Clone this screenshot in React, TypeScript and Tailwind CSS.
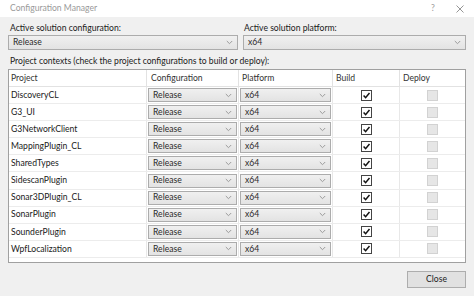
import React from "react";

const projects = [
  "DiscoveryCL",
  "G3_UI",
  "G3NetworkClient",
  "MappingPlugin_CL",
  "SharedTypes",
  "SidescanPlugin",
  "Sonar3DPlugin_CL",
  "SonarPlugin",
  "SounderPlugin",
  "WpfLocalization",
];

function Chevron({ color = "#888" }: { color?: string }) {
  return (
    <svg width="7" height="5" viewBox="0 0 7 5" className="shrink-0">
      <path d="M0.8 1 L3.5 3.7 L6.2 1" fill="none" stroke={color} strokeWidth="1" />
    </svg>
  );
}

function Combo({ value, h = "h-[15px]" }: { value: string; h?: string }) {
  return (
    <div
      className={`flex items-center justify-between ${h} border border-[#acacac] bg-gradient-to-b from-[#f0f0f0] to-[#e3e3e3] pl-[4px] pr-[4px] text-[#2a2a2a]`}
    >
      <span>{value}</span>
      <Chevron color="#9a9a9a" />
    </div>
  );
}

function Check({ checked }: { checked: boolean }) {
  if (checked) {
    return (
      <div className="w-[11px] h-[11px] border border-[#444] bg-white flex items-center justify-center">
        <svg width="9" height="9" viewBox="0 0 9 9">
          <path d="M1.6 4.6 L3.6 6.7 L7.5 2" fill="none" stroke="#111" strokeWidth="1.5" />
        </svg>
      </div>
    );
  }
  return <div className="w-[11px] h-[11px] border border-[#d2d2d2] bg-[#e6e6e6]" />;
}

export default function App() {
  return (
    <div
      className="w-[474px] h-[296px] bg-[#f0f0f0] overflow-hidden text-[8.6px] leading-none text-[#1a1a1a]"
      style={{ fontFamily: 'Lato, "Noto Sans", sans-serif' }}
    >
      {/* title bar */}
      <div className="h-[17px] bg-white flex items-center pl-[10px] pr-[9px] text-[#9a9a9a]">
        <span className="flex-1">Configuration Manager</span>
        <span className="w-[10px] text-center mr-[18px]">?</span>
        <svg width="8" height="8" viewBox="0 0 8 8" className="mr-[1px]">
          <path d="M0.5 0.5 L7.5 7.5 M7.5 0.5 L0.5 7.5" stroke="#8a8a8a" strokeWidth="0.9" />
        </svg>
      </div>

      <div className="px-[8px] pt-[5px] flex flex-col">
        <div className="grid grid-cols-[230px_1fr] gap-x-[5px]">
          <div className="flex flex-col">
            <div className="h-[13px] flex items-center pl-[2px]">Active solution configuration:</div>
            <Combo value="Release" h="h-[15px]" />
          </div>
          <div className="flex flex-col">
            <div className="h-[13px] flex items-center pl-[1px]">Active solution platform:</div>
            <Combo value="x64" h="h-[15px]" />
          </div>
        </div>

        <div className="h-[14px] mt-[4px] flex items-center pl-[2px]">
          Project contexts (check the project configurations to build or deploy):
        </div>

        <div className="border border-[#a0a0a0] bg-white h-[194px] mt-[1px]">
          <div className="grid grid-cols-[138px_92px_94px_67px_1fr] h-[17px] border-b border-[#e2e2e2] text-[#333]">
            <div className="flex items-center pl-[2px] border-r border-[#e2e2e2]">Project</div>
            <div className="flex items-center pl-[4px] border-r border-[#e2e2e2]">Configuration</div>
            <div className="flex items-center pl-[3px] border-r border-[#e2e2e2]">Platform</div>
            <div className="flex items-center pl-[3px] border-r border-[#e2e2e2]">Build</div>
            <div className="flex items-center pl-[3px]">Deploy</div>
          </div>
          {projects.map((p) => (
            <div
              key={p}
              className="grid grid-cols-[138px_92px_94px_67px_1fr] h-[17.1px] border-b border-[#ececec]"
            >
              <div className="flex items-center pl-[2px] border-r border-[#e8e8e8]">{p}</div>
              <div className="flex flex-col justify-center px-[1px] border-r border-[#e8e8e8]">
                <Combo value="Release" h="h-[14px]" />
              </div>
              <div className="flex flex-col justify-center px-[1px] border-r border-[#e8e8e8]">
                <Combo value="x64" h="h-[14px]" />
              </div>
              <div className="flex items-center justify-center border-r border-[#e8e8e8]">
                <Check checked />
              </div>
              <div className="flex items-center justify-center">
                <Check checked={false} />
              </div>
            </div>
          ))}
        </div>

        <div className="flex justify-end mt-[8px]">
          <div className="w-[59px] h-[17px] border border-[#adadad] bg-[#e1e1e1] flex items-center justify-center text-[#222]">
            Close
          </div>
        </div>
      </div>
    </div>
  );
}
